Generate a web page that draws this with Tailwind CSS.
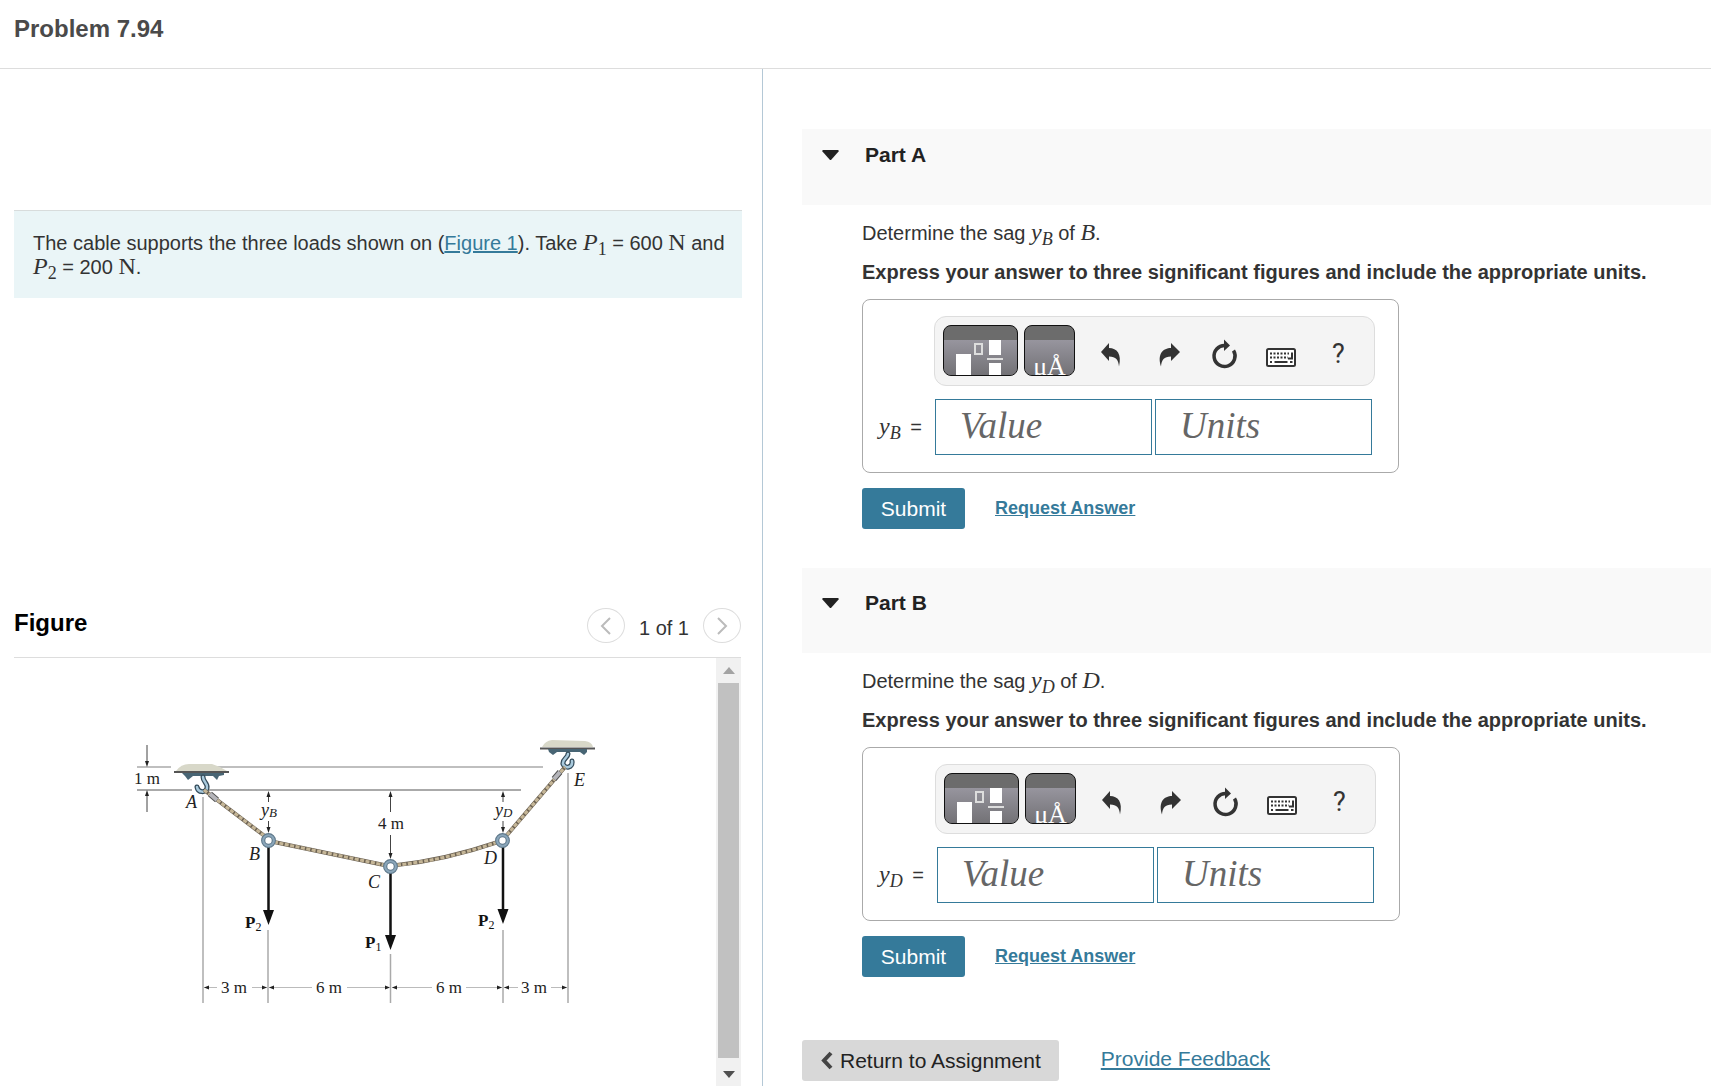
<!DOCTYPE html>
<html lang="en">

<head>
    <meta charset="UTF-8" />
    <meta name="viewport" content="width=device-width, initial-scale=1" />
    <title>Problem 7.94</title>
    <script src="https://cdn.jsdelivr.net/npm/@tailwindcss/browser@4"></script>
</head>

<body class="flex flex-col min-h-screen bg-white text-[#333] text-[20px] leading-6 font-['Liberation_Sans',Arial,sans-serif]">

    <!-- shared icons -->
    <svg class="hidden">
        <symbol id="icon-template" viewBox="0 0 75 36">
            <rect x="12" y="14" width="15" height="22" fill="#fff" />
            <rect x="31" y="4" width="7" height="10" fill="none" stroke="#ddd" stroke-width="2" />
            <rect x="45" y="0" width="12" height="15" fill="#fff" />
            <rect x="43" y="18" width="16" height="2" fill="#ddd" />
            <rect x="45" y="23" width="12" height="13" fill="#fff" />
        </symbol>
        <symbol id="icon-undo" viewBox="0 0 32 40">
            <path d="M6 21 14 12V17C22 17 27 23 24 35.500C23.500 29 21 25.500 14 25.500V30Z" fill="#333" />
        </symbol>
        <symbol id="icon-redo" viewBox="0 0 32 40">
            <path d="M28 21 19 12V17C11 17 5 23 9 35.500C9.500 29 12 25.500 19 25.500V30Z" fill="#333" />
        </symbol>
        <symbol id="icon-reset" viewBox="0 0 32 40">
            <path d="M16 14.500A10.500 10.500 0 1 0 24.500 19.500" fill="none" stroke="#333" stroke-width="3.500" />
            <path d="M15 8.500 21 14.500 15 20Z" fill="#333" />
        </symbol>
        <symbol id="icon-keyboard" viewBox="0 0 32 40">
            <rect x="1" y="18" width="28" height="17" rx="1.500" fill="#fff" stroke="#333" stroke-width="2" />
            <path d="M4 22.500H23M4 26.500H22" stroke="#333" stroke-width="2" stroke-dasharray="2 1.500" />
            <path d="M26 21.500V27.500H22M4 31H6M8.500 31H21.500M24 31H26.500" fill="none" stroke="#333" stroke-width="2" />
        </symbol>
        <symbol id="ring" viewBox="-8 -8 16 16">
            <circle r="5" fill="#fff" stroke="#5d7789" stroke-width="4" />
            <circle r="5" fill="none" stroke="#8aa6ba" stroke-width="2" />
        </symbol>
    </svg>

    <header class="px-[14px] pt-[14px] pb-[24px] border-b border-[#ddd]">
        <h1 class="text-[24px] leading-[30px] font-bold text-[#4a4a4a]">Problem 7.94</h1>
    </header>

    <div class="flex flex-1">
        <!-- left column: statement and figure -->
        <section class="w-[763px] shrink-0 flex flex-col border-r border-[#b4c8d6] pl-[14px] pr-5">
            <p class="mt-[141px] border-t border-[#d8dcdc] bg-[#eaf5f7] pl-[19px] pt-5 pb-[19px]">
                The cable supports the three loads shown on (<a href="#figure" class="text-[#357a9a] underline">Figure 1</a>). Take
                <span class="font-['Liberation_Serif',serif] text-[24px] leading-5"><i>P</i><sub class="text-[18px] leading-none">1</sub></span> = 600
                <span class="font-['Liberation_Serif',serif] text-[24px] leading-5">N</span> and
                <span class="font-['Liberation_Serif',serif] text-[24px] leading-5"><i>P</i><sub class="text-[18px] leading-none">2</sub></span> = 200
                <span class="font-['Liberation_Serif',serif] text-[24px] leading-5">N</span>.
            </p>

            <div id="figure" class="mt-[310px] mr-px flex flex-col flex-1">
                <div class="flex items-start justify-between pb-[14px] border-b border-[#ddd]">
                    <h2 class="text-[24px] leading-[30px] font-bold text-black">Figure</h2>
                    <div class="flex items-center">
                        <button aria-label="Previous figure" class="w-[38px] h-[35px] rounded-[50%] border border-[#ddd] flex items-center justify-center">
                            <svg width="12" height="18" viewBox="0 0 12 18" fill="none" stroke="#bbb" stroke-width="2"><path d="M10 1 2 9 10 17" /></svg>
                        </button>
                        <span class="px-[14px] pt-1">1 of 1</span>
                        <button aria-label="Next figure" class="w-[38px] h-[35px] rounded-[50%] border border-[#ddd] flex items-center justify-center">
                            <svg width="12" height="18" viewBox="0 0 12 18" fill="none" stroke="#bbb" stroke-width="2"><path d="M2 1 10 9 2 17" /></svg>
                        </button>
                    </div>
                </div>

                <div class="flex flex-1">
                    <div class="flex-1 pl-[106px] pt-[71px]">
                        <svg width="490" height="290" viewBox="120 730 490 290" class="font-['Liberation_Serif',serif]" role="img" aria-label="Cable ABCDE with loads at B, C and D">
                            <!-- reference lines -->
                            <g stroke="#aaa" stroke-width="2" fill="none">
                                <path d="M137 768H171M217 768H543" stroke-width="1.500" />
                                <path d="M137 791H192M205 791H521" />
                                <path d="M203 798V1004M268 931V1004M390.500 955V1004M503 931V1004M568 774V1004" stroke-width="1.500" />
                            </g>
                            <g stroke="#bbb" stroke-width="1" fill="none">
                                <path d="M204 988.500H217M252 988.500H267M269 988.500H312M347 988.500H389M392 988.500H432M466 988.500H502M504 988.500H518M551 988.500H567" />
                            </g>
                            <g stroke="#444" stroke-width="1" fill="none">
                                <path d="M147 746V764M147 795V813M268.500 795V803M268.500 822V830M390.500 795V813M390.500 836V856M503 795V803M503 822V830" />
                            </g>
                            <g fill="#222">
                                <path d="M147 768 145 762H149ZM147 791 145 797H149ZM268.500 792 266.500 798H270.500ZM268.500 834 266.500 828H270.500ZM390.500 792 388.500 798H392.500ZM390.500 860 388.500 854H392.500ZM503 792 501 798H505ZM503 834 501 828H505Z" />
                                <path d="M204 988.500 209 986.500V990.500ZM267 988.500 262 986.500V990.500ZM269 988.500 274 986.500V990.500ZM390 988.500 385 986.500V990.500ZM392 988.500 397 986.500V990.500ZM502 988.500 497 986.500V990.500ZM504 988.500 509 986.500V990.500ZM567 988.500 562 986.500V990.500Z" />
                            </g>

                            <!-- ceiling supports -->
                            <path d="M176 772Q181 765 189 765L212 765 220 768 227 772Z" fill="#d8d8c9" />
                            <path d="M174 773H229" stroke="#555" stroke-width="2" />
                            <path d="M182 774H224V776L219 777 217 781 213 777H193L188 781 185 777Z" fill="#486574" />
                            <path d="M542 748Q545 742 552 741L585 742Q592 743 593 748Z" fill="#d8d8c9" />
                            <path d="M540 749.500H595" stroke="#555" stroke-width="2" />
                            <path d="M548 750H587V753L584 756 580 753H557L553 756 549 753Z" fill="#486574" />
                            <g fill="none" stroke-linecap="round">
                                <path d="M203 778C203 783 208 784 207 789C206 794 198 794 197 788" stroke="#334b5a" stroke-width="5" />
                                <path d="M203 778C203 783 208 784 207 789C206 794 198 794 197 788" stroke="#a9cadd" stroke-width="2.500" />
                                <path d="M568 755C568 759 562 760 563 765C565 770 573 769 572 762" stroke="#334b5a" stroke-width="5" />
                                <path d="M568 755C568 759 562 760 563 765C565 770 573 769 572 762" stroke="#a9cadd" stroke-width="2.500" />
                            </g>

                            <!-- rope -->
                            <g fill="none">
                                <path d="M204 791 266 838M274 843 384 866M397 866Q445 861 498 843M507 836 565 768" stroke="#6b6152" stroke-width="4" />
                                <path d="M204 791 266 838M274 843 384 866M397 866Q445 861 498 843M507 836 565 768" stroke="#c5b697" stroke-width="3" stroke-dasharray="4 1.500" />
                                <path d="M210 795 217 801M560 773 554 780" stroke="#555" stroke-width="6" />
                                <path d="M210 795 217 801M560 773 554 780" stroke="#b5b5ba" stroke-width="4" />
                            </g>

                            <!-- loads -->
                            <path d="M268.500 846V914M390.500 872V940M503 846V913" stroke="#111" stroke-width="2.500" />
                            <path d="M268.500 926 263 911H274ZM390.500 951 385 936H396ZM503 925 497.500 910H508.500Z" fill="#111" />
                            <use href="#ring" x="260" y="833" width="17" height="17" />
                            <use href="#ring" x="382" y="859" width="17" height="17" />
                            <use href="#ring" x="494" y="833" width="17" height="17" />

                            <g fill="#222" font-size="17">
                                <text x="134" y="785">1 m</text>
                                <text x="378" y="830">4 m</text>
                                <text x="221" y="994">3 m</text>
                                <text x="316" y="994">6 m</text>
                                <text x="436" y="994">6 m</text>
                                <text x="521" y="994">3 m</text>
                            </g>
                            <g fill="#222" font-size="18" font-style="italic">
                                <text x="186" y="809">A</text>
                                <text x="249" y="861">B</text>
                                <text x="368" y="889">C</text>
                                <text x="484" y="865">D</text>
                                <text x="574" y="787">E</text>
                                <text x="261" y="817">y<tspan font-size="13" dy="1">B</tspan></text>
                                <text x="495" y="817">y<tspan font-size="13" dy="1">D</tspan></text>
                            </g>
                            <g fill="#111" font-size="17" font-weight="bold">
                                <text x="245" y="929">P<tspan font-size="12" font-weight="normal" dy="3">2</tspan></text>
                                <text x="365" y="949">P<tspan font-size="12" font-weight="normal" dy="3">1</tspan></text>
                                <text x="478" y="927">P<tspan font-size="12" font-weight="normal" dy="3">2</tspan></text>
                            </g>
                        </svg>
                    </div>
                    <!-- scroll bar -->
                    <div class="w-[25px] bg-[#f1f1f1] flex flex-col items-center">
                        <svg class="my-[9px]" width="12" height="7" viewBox="0 0 12 7"><path d="M0 7 6 0 12 7Z" fill="#a3a3a3" /></svg>
                        <div class="w-[21px] flex-1 bg-[#c1c1c1]"></div>
                        <svg class="mt-[13px] mb-[8px]" width="12" height="7" viewBox="0 0 12 7"><path d="M0 0 6 7 12 0Z" fill="#505050" /></svg>
                    </div>
                </div>
            </div>
        </section>

        <!-- right column: answer parts -->
        <main class="flex-1 min-w-0 pl-[39px] pt-[60px]">
            <section>
                <div class="flex items-start h-[76px] pt-[14px] pl-5 bg-[#f9f9f9]">
                    <svg class="mt-[7px]" width="17" height="10" viewBox="0 0 17 10"><path d="M0 1 1 0H16L17 1 9 10H8Z" fill="#222" /></svg>
                    <h2 class="ml-[26px] text-[21px] font-bold text-[#222]">Part A</h2>
                </div>
                <div class="pl-[60px]">
                    <p class="pt-4">Determine the sag <span class="font-['Liberation_Serif',serif] text-[24px] leading-5 italic">y<sub class="text-[18px] leading-none">B</sub></span> of <i class="font-['Liberation_Serif',serif] text-[24px] leading-5">B</i>.</p>
                    <p class="mt-[15px] font-bold">Express your answer to three significant figures and include the appropriate units.</p>
                    <div class="mt-[15px] w-[537px] h-[174px] rounded-lg border border-[#aaa] pt-4 pl-[71px]">
                        <div class="w-[441px] h-[70px] rounded-xl border border-[#ddd] bg-[#f4f4f4] flex pl-2 pt-2">
                            <button aria-label="Templates" class="w-[75px] h-[51px] rounded-lg border border-[#111] overflow-hidden bg-[#6c6c6c] pt-[14px]">
                                <svg width="75" height="36" class="max-w-none bg-linear-to-b from-[#97959e] to-[#727175]"><use href="#icon-template" /></svg>
                            </button>
                            <button aria-label="Symbols" class="ml-[6px] w-[51px] h-[51px] rounded-lg border border-[#111] overflow-hidden bg-[#6c6c6c] pt-[14px]">
                                <span class="block h-[36px] bg-linear-to-b from-[#97959e] to-[#727175] text-white text-[26px] leading-[54px] font-['Liberation_Serif',serif]">μÅ</span>
                            </button>
                            <div class="ml-[7px] flex h-[51px] items-center">
                                <button aria-label="Undo" class="w-[57px] flex justify-center"><svg width="32" height="40"><use href="#icon-undo" /></svg></button>
                                <button aria-label="Redo" class="w-[57px] flex justify-center"><svg width="32" height="40"><use href="#icon-redo" /></svg></button>
                                <button aria-label="Reset" class="w-[57px] flex justify-center"><svg width="32" height="40"><use href="#icon-reset" /></svg></button>
                                <button aria-label="Keyboard shortcuts" class="w-[57px] flex justify-center"><svg width="32" height="40"><use href="#icon-keyboard" /></svg></button>
                                <button aria-label="Help" class="w-[57px] pt-[6px] text-[27px] font-[Roboto,sans-serif]">?</button>
                            </div>
                        </div>
                        <div class="mt-[13px] -ml-[55px] flex items-center">
                            <label for="valueA" class="w-14 whitespace-nowrap"><span class="mr-1 font-['Liberation_Serif',serif] text-[24px] leading-5 italic">y<sub class="text-[18px] leading-none">B</sub></span> =</label>
                            <input id="valueA" type="text" placeholder="Value" class="w-[217px] h-14 border border-[#357a9a] pl-6 pb-1 text-[37px] italic font-['Liberation_Serif',serif] placeholder:text-[#666]" />
                            <input aria-label="Units" type="text" placeholder="Units" class="ml-[3px] w-[217px] h-14 border border-[#357a9a] pl-6 pb-1 text-[37px] italic font-['Liberation_Serif',serif] placeholder:text-[#666]" />
                        </div>
                    </div>
                    <div class="mt-[15px] flex items-center">
                        <button class="w-[103px] h-[41px] rounded-[3px] bg-[#357a9a] text-white text-[21px]">Submit</button>
                        <a href="#" class="ml-[30px] pb-[2px] text-[18px] font-bold text-[#357a9a] underline">Request Answer</a>
                    </div>
                </div>
            </section>

            <section class="mt-[39px]">
                <div class="flex items-start h-[85px] pt-[23px] pl-5 bg-[#f9f9f9]">
                    <svg class="mt-[7px]" width="17" height="10" viewBox="0 0 17 10"><path d="M0 1 1 0H16L17 1 9 10H8Z" fill="#222" /></svg>
                    <h2 class="ml-[26px] text-[21px] font-bold text-[#222]">Part B</h2>
                </div>
                <div class="pl-[60px]">
                    <p class="pt-4">Determine the sag <span class="font-['Liberation_Serif',serif] text-[24px] leading-5 italic">y<sub class="text-[18px] leading-none">D</sub></span> of <i class="font-['Liberation_Serif',serif] text-[24px] leading-5">D</i>.</p>
                    <p class="mt-[15px] font-bold">Express your answer to three significant figures and include the appropriate units.</p>
                    <div class="mt-[15px] w-[538px] h-[174px] rounded-lg border border-[#aaa] pt-4 pl-[72px]">
                        <div class="w-[441px] h-[70px] rounded-xl border border-[#ddd] bg-[#f4f4f4] flex pl-2 pt-2">
                            <button aria-label="Templates" class="w-[75px] h-[51px] rounded-lg border border-[#111] overflow-hidden bg-[#6c6c6c] pt-[14px]">
                                <svg width="75" height="36" class="max-w-none bg-linear-to-b from-[#97959e] to-[#727175]"><use href="#icon-template" /></svg>
                            </button>
                            <button aria-label="Symbols" class="ml-[6px] w-[51px] h-[51px] rounded-lg border border-[#111] overflow-hidden bg-[#6c6c6c] pt-[14px]">
                                <span class="block h-[36px] bg-linear-to-b from-[#97959e] to-[#727175] text-white text-[26px] leading-[54px] font-['Liberation_Serif',serif]">μÅ</span>
                            </button>
                            <div class="ml-[7px] flex h-[51px] items-center">
                                <button aria-label="Undo" class="w-[57px] flex justify-center"><svg width="32" height="40"><use href="#icon-undo" /></svg></button>
                                <button aria-label="Redo" class="w-[57px] flex justify-center"><svg width="32" height="40"><use href="#icon-redo" /></svg></button>
                                <button aria-label="Reset" class="w-[57px] flex justify-center"><svg width="32" height="40"><use href="#icon-reset" /></svg></button>
                                <button aria-label="Keyboard shortcuts" class="w-[57px] flex justify-center"><svg width="32" height="40"><use href="#icon-keyboard" /></svg></button>
                                <button aria-label="Help" class="w-[57px] pt-[6px] text-[27px] font-[Roboto,sans-serif]">?</button>
                            </div>
                        </div>
                        <div class="mt-[13px] -ml-[56px] flex items-center">
                            <label for="valueB" class="w-[58px] whitespace-nowrap"><span class="mr-1 font-['Liberation_Serif',serif] text-[24px] leading-5 italic">y<sub class="text-[18px] leading-none">D</sub></span> =</label>
                            <input id="valueB" type="text" placeholder="Value" class="w-[217px] h-14 border border-[#357a9a] pl-6 pb-1 text-[37px] italic font-['Liberation_Serif',serif] placeholder:text-[#666]" />
                            <input aria-label="Units" type="text" placeholder="Units" class="ml-[3px] w-[217px] h-14 border border-[#357a9a] pl-6 pb-1 text-[37px] italic font-['Liberation_Serif',serif] placeholder:text-[#666]" />
                        </div>
                    </div>
                    <div class="mt-[15px] flex items-center">
                        <button class="w-[103px] h-[41px] rounded-[3px] bg-[#357a9a] text-white text-[21px]">Submit</button>
                        <a href="#" class="ml-[30px] pb-[2px] text-[18px] font-bold text-[#357a9a] underline">Request Answer</a>
                    </div>
                </div>
            </section>

            <div class="mt-[63px] mb-1 flex items-center text-[21px]">
                <button class="h-[41px] px-[18px] rounded-[3px] bg-[#d8d8d8] text-[#222] flex items-center gap-[7px]">
                    <svg width="13" height="19" viewBox="0 0 13 19" fill="none" stroke="#444" stroke-width="4"><path d="M11 2 4 9.500 11 17" /></svg>
                    Return to Assignment
                </button>
                <a href="#" class="ml-[42px] pb-1 text-[#357a9a] underline">Provide Feedback</a>
            </div>
        </main>
    </div>
</body>

</html>
